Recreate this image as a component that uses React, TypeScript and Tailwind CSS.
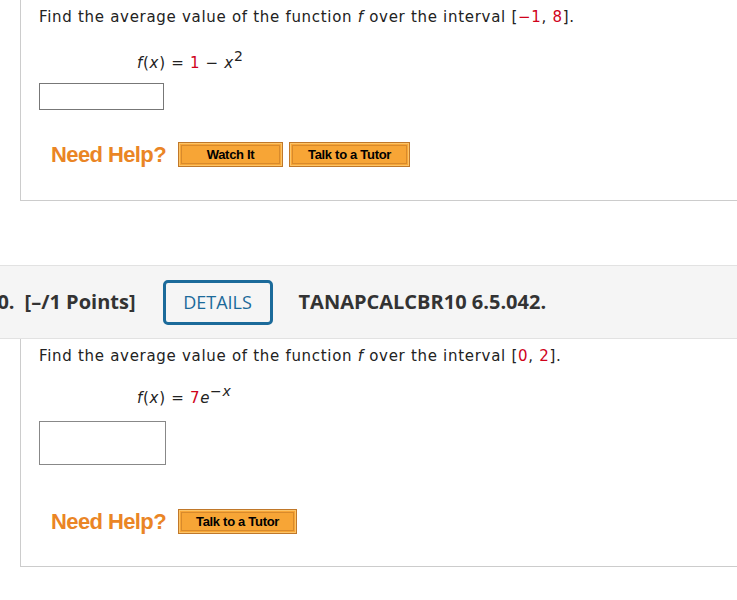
import React from 'react';

const body = { fontFamily: '"DejaVu Sans", Verdana, sans-serif' };
const head = { fontFamily: '"Open Sans", sans-serif' };
const arial = { fontFamily: '"Liberation Sans", Arial, sans-serif' };

function OrangeButton({ label, w }: { label: string; w: string }) {
  return (
    <button
      style={arial}
      className={`${w} h-[25px] border border-[#c0782a] bg-[#f7a536] p-[2px] shadow-[inset_0_0_0_1px_#fcc468]`}
    >
      <span className="flex h-full w-full items-center justify-center border border-[#d88a2c] text-[13px] font-bold leading-none tracking-[-0.3px] text-black">
        {label}
      </span>
    </button>
  );
}

function NeedHelp({ children }: { children: React.ReactNode }) {
  return (
    <div className="flex items-center gap-[12px] pl-[30px]">
      <span style={arial} className="text-[22px] font-bold tracking-[-0.6px] text-[#ea8525]">
        Need Help?
      </span>
      <div className="flex gap-[6px]">{children}</div>
    </div>
  );
}

export default function App() {
  return (
    <div className="h-[600px] w-[737px] overflow-hidden bg-white text-[#222]">
      {/* first question, tail end */}
      <div className="ml-[20px] h-[201px] border-b border-l border-[#cccccc]">
        <p style={body} className="pl-[18px] pt-[6px] text-[15px] leading-[22px] tracking-[0.7px]">
          Find the average value of the function <i>f</i> over the interval [
          <span className="text-[#d0021b]">−1</span>, <span className="text-[#d0021b]">8</span>].
        </p>
        <p style={body} className="mt-[25px] pl-[116px] text-[15px] leading-[20px] tracking-[0.7px]">
          <i>f</i>(<i>x</i>) = <span className="text-[#d0021b]">1</span> − <i>x</i>
          <sup className="text-[14px]">2</sup>
        </p>
        <div className="ml-[18px] mt-[10px] h-[27px] w-[125px] border border-[#777]" />
        <div className="mt-[28px]">
          <NeedHelp>
            <OrangeButton label="Watch It" w="w-[105px]" />
            <OrangeButton label="Talk to a Tutor" w="w-[121px]" />
          </NeedHelp>
        </div>
      </div>

      {/* second question header */}
      <div
        style={head}
        className="mt-[64px] flex h-[74px] items-center border-y border-[#e2e2e2] bg-[#f5f5f5] text-[#333]"
      >
        <span className="ml-[-14px] text-[20px] font-bold">10.</span>
        <span className="ml-[10px] text-[20px] font-bold">[–/1 Points]</span>
        <span className="ml-[27px] flex h-[45px] w-[110px] items-center justify-center rounded-[5px] border-[3px] border-[#1b6a9a] text-[18px] text-[#1b6a9a]">
          DETAILS
        </span>
        <span className="ml-[26px] text-[20px] font-bold">TANAPCALCBR10 6.5.042.</span>
      </div>

      <div className="ml-[20px] h-[228px] border-b border-l border-[#cccccc]">
        <p style={body} className="pl-[18px] pt-[6px] text-[15px] leading-[22px] tracking-[0.7px]">
          Find the average value of the function <i>f</i> over the interval [
          <span className="text-[#d0021b]">0</span>, <span className="text-[#d0021b]">2</span>].
        </p>
        <p style={body} className="mt-[21px] pl-[116px] text-[15px] leading-[20px] tracking-[0.7px]">
          <i>f</i>(<i>x</i>) = <span className="text-[#d0021b]">7</span><i>e</i>
          <sup className="text-[14px]">−<i>x</i></sup>
        </p>
        <div className="ml-[18px] mt-[13px] h-[44px] w-[127px] border border-[#888]" />
        <div className="mt-[40px]">
          <NeedHelp>
            <OrangeButton label="Talk to a Tutor" w="w-[119px]" />
          </NeedHelp>
        </div>
      </div>
    </div>
  );
}
